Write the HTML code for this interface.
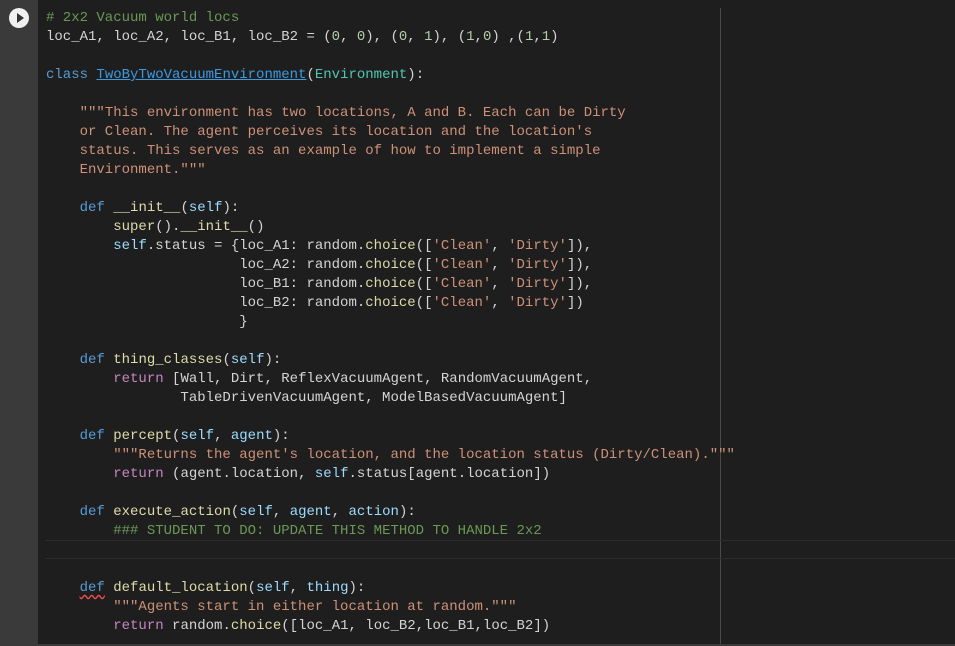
<!DOCTYPE html>
<html><head><meta charset="utf-8"><style>
html,body{margin:0;padding:0;width:955px;height:646px;overflow:hidden;background:#1e1e1e}
.gut{position:absolute;left:0;top:0;width:38px;height:646px;background:#3a3a3a}
.btn{position:absolute;left:9px;top:8px;width:20px;height:20px;border-radius:50%;background:#f0f0f0}
.btn:after{content:"";position:absolute;left:8px;top:5px;border-left:7px solid #333;border-top:5px solid transparent;border-bottom:5px solid transparent}
.rule{position:absolute;left:720px;top:8px;width:1px;height:638px;background:#4a4a4a}
.cur{position:absolute;left:45px;top:540px;width:910px;height:17px;border-top:1px solid #2c2c2c;border-bottom:1px solid #2c2c2c}
.bot{position:absolute;left:38px;top:644px;width:917px;height:2px;background:#3a3a3a}
pre{position:absolute;left:46px;top:9px;margin:0;font-family:"Liberation Mono",monospace;font-size:14px;line-height:19px;color:#d4d4d4;white-space:pre;font-weight:500}
.c{color:#6a9955}.s{color:#ce9178}.k{color:#569cd6}.f{color:#dcdcaa}.p{color:#9cdcfe}.t{color:#4ec9b0}.r{color:#c586c0}.n{color:#b5cea8}
.u{color:#3c9ae0;text-decoration:underline}
.w{text-decoration:underline wavy #f14c4c;text-underline-offset:3px}
</style></head><body>
<div class="gut"><div class="btn"></div></div>
<div class="rule"></div><div class="cur"></div><div class="bot"></div>
<pre><span class="c"># 2x2 Vacuum world locs</span>
loc_A1, loc_A2, loc_B1, loc_B2 = (<span class="n">0</span>, <span class="n">0</span>), (<span class="n">0</span>, <span class="n">1</span>), (<span class="n">1</span>,<span class="n">0</span>) ,(<span class="n">1</span>,<span class="n">1</span>)

<span class="k">class</span> <span class="u">TwoByTwoVacuumEnvironment</span>(<span class="t">Environment</span>):

    <span class="s">"""This environment has two locations, A and B. Each can be Dirty
    or Clean. The agent perceives its location and the location's
    status. This serves as an example of how to implement a simple
    Environment."""</span>

    <span class="k">def</span> <span class="f">__init__</span>(<span class="p">self</span>):
        <span class="f">super</span>().<span class="f">__init__</span>()
        <span class="p">self</span>.status = {loc_A1: random.<span class="f">choice</span>([<span class="s">'Clean'</span>, <span class="s">'Dirty'</span>]),
                       loc_A2: random.<span class="f">choice</span>([<span class="s">'Clean'</span>, <span class="s">'Dirty'</span>]),
                       loc_B1: random.<span class="f">choice</span>([<span class="s">'Clean'</span>, <span class="s">'Dirty'</span>]),
                       loc_B2: random.<span class="f">choice</span>([<span class="s">'Clean'</span>, <span class="s">'Dirty'</span>])
                       }

    <span class="k">def</span> <span class="f">thing_classes</span>(<span class="p">self</span>):
        <span class="r">return</span> [Wall, Dirt, ReflexVacuumAgent, RandomVacuumAgent,
                TableDrivenVacuumAgent, ModelBasedVacuumAgent]

    <span class="k">def</span> <span class="f">percept</span>(<span class="p">self</span>, <span class="p">agent</span>):
        <span class="s">"""Returns the agent's location, and the location status (Dirty/Clean)."""</span>
        <span class="r">return</span> (agent.location, <span class="p">self</span>.status[agent.location])

    <span class="k">def</span> <span class="f">execute_action</span>(<span class="p">self</span>, <span class="p">agent</span>, <span class="p">action</span>):
        <span class="c">### STUDENT TO DO: UPDATE THIS METHOD TO HANDLE 2x2</span>


    <span class="k w">def</span> <span class="f">default_location</span>(<span class="p">self</span>, <span class="p">thing</span>):
        <span class="s">"""Agents start in either location at random."""</span>
        <span class="r">return</span> random.<span class="f">choice</span>([loc_A1, loc_B2,loc_B1,loc_B2])</pre>
</body></html>
